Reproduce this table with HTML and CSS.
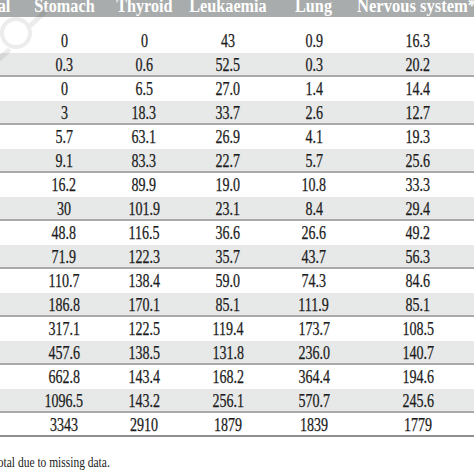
FILE: index.html
```html
<!DOCTYPE html>
<html>
<head>
<meta charset="utf-8">
<link rel="stylesheet" href="styles.css">
</head>
<body>
<div class="page">
  <table class="data">
    <colgroup>
      <col class="c0"><col class="c1"><col class="c2"><col class="c3"><col class="c4"><col class="c5">
    </colgroup>
    <thead>
      <tr>
        <th class="first"><span class="h hr">Total</span></th>
        <th><span class="h">Stomach</span></th>
        <th><span class="h">Thyroid</span></th>
        <th><span class="h">Leukaemia</span></th>
        <th><span class="h">Lung</span></th>
        <th class="lastcol"><span class="h hl">Nervous system*</span></th>
      </tr>
    </thead>
    <tbody>
      <tr><td></td><td><span class="n">0</span></td><td><span class="n">0</span></td><td><span class="n">43</span></td><td><span class="n">0.9</span></td><td><span class="n">16.3</span></td></tr>
      <tr class="alt"><td></td><td><span class="n">0.3</span></td><td><span class="n">0.6</span></td><td><span class="n">52.5</span></td><td><span class="n">0.3</span></td><td><span class="n">20.2</span></td></tr>
      <tr><td></td><td><span class="n">0</span></td><td><span class="n">6.5</span></td><td><span class="n">27.0</span></td><td><span class="n">1.4</span></td><td><span class="n">14.4</span></td></tr>
      <tr class="alt"><td></td><td><span class="n">3</span></td><td><span class="n">18.3</span></td><td><span class="n">33.7</span></td><td><span class="n">2.6</span></td><td><span class="n">12.7</span></td></tr>
      <tr><td></td><td><span class="n">5.7</span></td><td><span class="n">63.1</span></td><td><span class="n">26.9</span></td><td><span class="n">4.1</span></td><td><span class="n">19.3</span></td></tr>
      <tr class="alt"><td></td><td><span class="n">9.1</span></td><td><span class="n">83.3</span></td><td><span class="n">22.7</span></td><td><span class="n">5.7</span></td><td><span class="n">25.6</span></td></tr>
      <tr><td></td><td><span class="n">16.2</span></td><td><span class="n">89.9</span></td><td><span class="n">19.0</span></td><td><span class="n">10.8</span></td><td><span class="n">33.3</span></td></tr>
      <tr class="alt"><td></td><td><span class="n">30</span></td><td><span class="n">101.9</span></td><td><span class="n">23.1</span></td><td><span class="n">8.4</span></td><td><span class="n">29.4</span></td></tr>
      <tr><td></td><td><span class="n">48.8</span></td><td><span class="n">116.5</span></td><td><span class="n">36.6</span></td><td><span class="n">26.6</span></td><td><span class="n">49.2</span></td></tr>
      <tr class="alt"><td></td><td><span class="n">71.9</span></td><td><span class="n">122.3</span></td><td><span class="n">35.7</span></td><td><span class="n">43.7</span></td><td><span class="n">56.3</span></td></tr>
      <tr><td></td><td><span class="n">110.7</span></td><td><span class="n">138.4</span></td><td><span class="n">59.0</span></td><td><span class="n">74.3</span></td><td><span class="n">84.6</span></td></tr>
      <tr class="alt"><td></td><td><span class="n">186.8</span></td><td><span class="n">170.1</span></td><td><span class="n">85.1</span></td><td><span class="n">111.9</span></td><td><span class="n">85.1</span></td></tr>
      <tr><td></td><td><span class="n">317.1</span></td><td><span class="n">122.5</span></td><td><span class="n">119.4</span></td><td><span class="n">173.7</span></td><td><span class="n">108.5</span></td></tr>
      <tr class="alt"><td></td><td><span class="n">457.6</span></td><td><span class="n">138.5</span></td><td><span class="n">131.8</span></td><td><span class="n">236.0</span></td><td><span class="n">140.7</span></td></tr>
      <tr><td></td><td><span class="n">662.8</span></td><td><span class="n">143.4</span></td><td><span class="n">168.2</span></td><td><span class="n">364.4</span></td><td><span class="n">194.6</span></td></tr>
      <tr class="alt"><td></td><td><span class="n">1096.5</span></td><td><span class="n">143.2</span></td><td><span class="n">256.1</span></td><td><span class="n">570.7</span></td><td><span class="n">245.6</span></td></tr>
      <tr class="last"><td></td><td><span class="n">3343</span></td><td><span class="n">2910</span></td><td><span class="n">1879</span></td><td><span class="n">1839</span></td><td><span class="n">1779</span></td></tr>
    </tbody>
  </table>
  <p class="note"><span class="nt">* May not add up to total due to missing data.</span></p>
</div>
<svg class="watermark" width="70" height="80" viewBox="0 0 70 80" aria-hidden="true">
  <circle cx="16" cy="33" r="14" fill="none" stroke="#000" stroke-width="4"/>
  <line x1="31" y1="25" x2="46" y2="11" stroke="#000" stroke-width="5" stroke-linecap="round"/>
  <line x1="-2" y1="60" x2="8" y2="51" stroke="#000" stroke-width="5" stroke-linecap="round"/>
</svg>
</body>
</html>
```

FILE: styles.css
```css
html, body {
  margin: 0;
  padding: 0;
  width: 474px;
  height: 474px;
  overflow: hidden;
  background: #ffffff;
}

.page {
  margin-left: -56px;
  width: 536px;
  font-family: "Liberation Serif", "Times New Roman", serif;
  color: #1c1c1c;
}

.data {
  width: 536px;
  table-layout: fixed;
  border-collapse: separate;
  border-spacing: 0;
}

.c0 { width: 80px; }
.c1 { width: 80px; }
.c2 { width: 80px; }
.c3 { width: 88px; }
.c4 { width: 84px; }
.c5 { width: 124px; }

.data th {
  background: #a9acac;
  color: #ffffff;
  font-size: 18px;
  font-weight: bold;
  line-height: 13px;
  height: 13px;
  padding: 0 0 4px;
  vertical-align: top;
  text-align: center;
  white-space: nowrap;
  overflow: hidden;
}

.data th.first {
  text-align: right;
  padding-right: 14px;
}

.data th.lastcol {
  text-align: left;
  padding-left: 1px;
}

.h {
  display: inline-block;
  transform: scaleX(0.9);
}

.hr {
  transform-origin: right center;
}

.hl {
  transform: scaleX(0.92);
  transform-origin: left center;
}

.data td {
  font-size: 18px;
  line-height: 24px;
  padding: 0;
  text-align: center;
  white-space: nowrap;
}

.data tbody tr:first-child td {
  padding-top: 12px;
}

.data tr.alt td {
  background: #e7e8e8;
  box-shadow: inset 0 -2px 0 #a9a9a9;
}

.data tr.last td {
  box-shadow: inset 0 -2px 0 #8e8e8e;
}

.n {
  display: inline-block;
  transform: scaleX(0.78);
  -webkit-text-stroke: 0.25px #1c1c1c;
}

.note {
  margin: 18px 0 0 56px;
  font-size: 14px;
  line-height: 16px;
  white-space: nowrap;
  color: #222222;
}

.nt {
  display: inline-block;
  margin-left: -101px;
  transform: scaleX(0.82);
  transform-origin: left center;
}

.watermark {
  position: absolute;
  left: 0;
  top: 0;
  opacity: 0.07;
}
```
